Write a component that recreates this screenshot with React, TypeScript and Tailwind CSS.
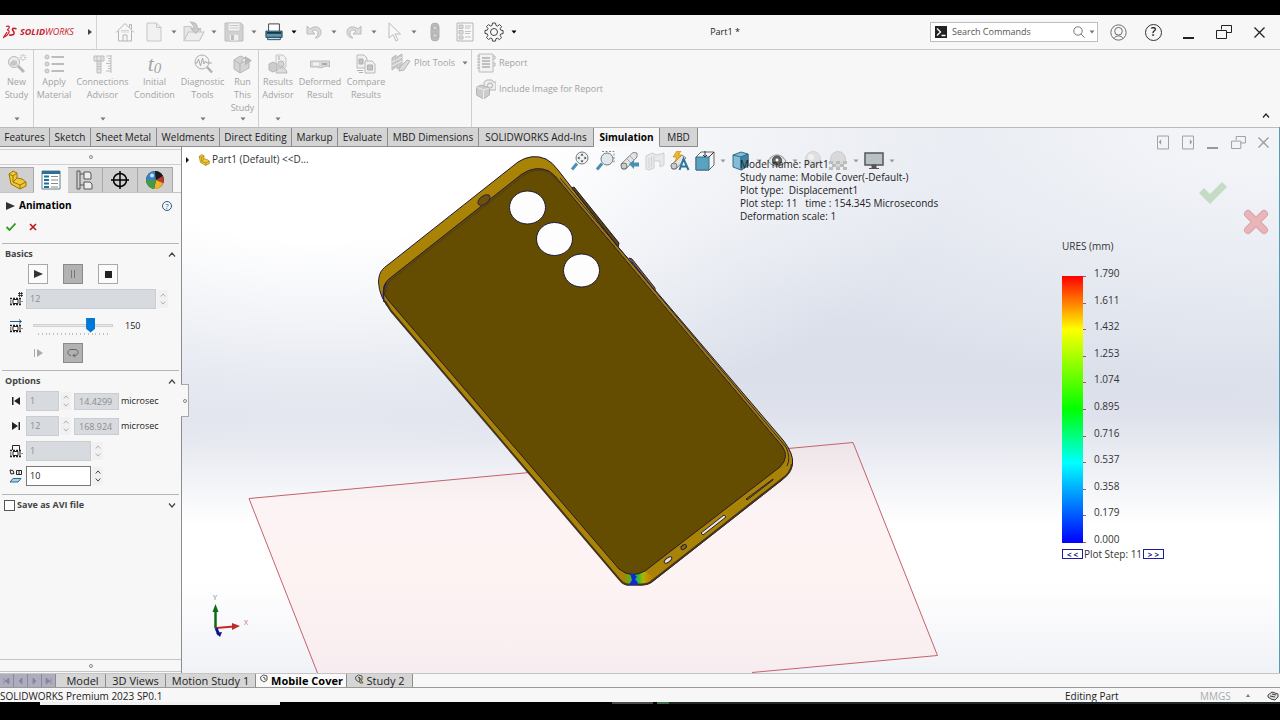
import { ReactNode } from "react";

function Icon({ children, size = 20, className = "" }: { children: ReactNode; size?: number; className?: string }) {
  return (
    <svg viewBox="0 0 20 20" width={size} height={size} className={`shrink-0 ${className}`} fill="none" stroke="currentColor" strokeWidth="1" aria-hidden="true">
      {children}
    </svg>
  );
}

function Caret({ className = "text-[#777]" }: { className?: string }) {
  return (
    <svg viewBox="0 0 6 4" width="6" height="4" className={`shrink-0 ${className}`} aria-hidden="true">
      <path d="M0.5 0.5h5L3 3.5z" fill="currentColor" />
    </svg>
  );
}

const icons = {
  home: (
    <Icon>
      <path d="M1 10.5 10 1.5l9 9M3.5 9v10h13V9M8 19v-6h4v6M14.5 5V2.500h2V7" stroke="#b5b5b5" />
      <path d="M6 10h8M6 8.500h8" stroke="#d5d5d5" />
    </Icon>
  ),
  doc: (
    <Icon>
      <path d="M3 1h9.500L17 5.500V19H3z" fill="#f1f1f1" stroke="#c6c6c6" />
      <path d="M12.500 1v4.500H17" stroke="#c6c6c6" />
    </Icon>
  ),
  open: (
    <Icon size={22}>
      <path d="M1 18V5h6l2 2h7v3" fill="#e6e6e6" stroke="#c6c6c6" />
      <path d="M1 18l4-8h14l-4 8z" fill="#eeeeee" stroke="#c6c6c6" />
      <path d="M7 1c4 0 6 2 6 6h2.500L11.500 11 7.500 7H10c0-2-1-4-3-6z" fill="#cccccc" stroke="#bdbdbd" />
    </Icon>
  ),
  save: (
    <Icon>
      <path d="M1 1h16l2 2v16H1z" fill="#d2d2d2" stroke="#bdbdbd" />
      <path d="M4 1h12v8H4z" fill="#f4f4f4" stroke="#c6c6c6" />
      <path d="M5.500 3.500h9M5.500 6h9" stroke="#c6c6c6" />
      <path d="M5 12h10v7H5z" fill="#efefef" stroke="#c6c6c6" />
      <path d="M7 13h3v5H7z" fill="#bdbdbd" stroke="none" />
    </Icon>
  ),
  print: (
    <Icon size={18}>
      <path d="M4 9V1h12v8" fill="#fff" stroke="#333" />
      <path d="M1 9h18v7H1z" fill="#5e93ad" stroke="#1d3f50" />
      <path d="M2 10h16v2H2z" fill="#16384a" stroke="none" />
      <path d="M3 16h14v2.500H3z" fill="#bfe0ee" stroke="#1d3f50" />
    </Icon>
  ),
  undo: (
    <Icon>
      <path d="M3 4v8h8L8 9c3-2 6-1 6 2 0 2-1 4-3 5 4 0 6-3 6-6 0-5-6-7-11-3z" fill="#dcdcdc" stroke="#bcbcbc" />
    </Icon>
  ),
  redo: (
    <Icon>
      <path d="M17 4v8H9l3-3c-3-2-6-1-6 2 0 2 1 4 3 5-4 0-6-3-6-6 0-5 6-7 11-3z" fill="#dcdcdc" stroke="#bcbcbc" />
    </Icon>
  ),
  cursor: (
    <Icon>
      <path d="M5 1v15l4-3.500L12 19l2-1-3-6h5.500z" fill="#f8f8f8" stroke="#bcbcbc" />
    </Icon>
  ),
  light: (
    <Icon>
      <rect x="6" y="1" width="8" height="18" rx="4" fill="#bdbdbd" stroke="#b0b0b0" />
      <circle cx="10" cy="6" r="2.500" fill="#cdcdcd" stroke="#a9a9a9" />
      <circle cx="10" cy="13.500" r="2.500" fill="#cdcdcd" stroke="#a9a9a9" />
    </Icon>
  ),
  list: (
    <Icon>
      <path d="M2 1h16v18H2z" stroke="#b5b5b5" />
      <path d="M4 3h4v3.500H4zM4 8.500h4V12H4zM4 14h4v3H4z" fill="#dcdcdc" stroke="#bcbcbc" />
      <path d="M10 4h6M10 6h5M10 9.500h6M10 11.500h5M10 15h6" stroke="#c2c2c2" />
    </Icon>
  ),
  gear: (
    <Icon>
      <path
        d="M8.500 1h3l.5 2.500 1.500.6L15.600 2.600l2 2-1.400 2.100.6 1.500 2.300.4v3l-2.400.4-.6 1.500 1.400 2.100-2 2-2.100-1.400-1.500.6-.4 2.300h-3l-.4-2.400-1.500-.6-2.100 1.400-2-2 1.400-2.100-.6-1.500L1 11.500v-3l2.400-.4.600-1.500L2.500 4.600l2-2L6.600 4l1.500-.6z"
        stroke="#444"
      />
      <circle cx="10" cy="10" r="3.500" stroke="#444" />
    </Icon>
  ),
  newStudy: (
    <Icon>
      <circle cx="7" cy="8" r="5.500" fill="#ececec" stroke="#b8b8b8" />
      <path d="M3 9l3-3 4 1v4l-4 1-3-1z" fill="#c7c7c7" stroke="none" />
      <path d="M11 12l6 6" stroke="#b8b8b8" strokeWidth="3" />
      <path d="M16 0v7M12.500 3.500h7M13.500 1l5 5M18.500 1l-5 5" stroke="#bdbdbd" />
      <circle cx="16" cy="3.500" r="1.500" fill="#f7f7f7" stroke="none" />
    </Icon>
  ),
  material: (
    <Icon>
      <circle cx="3" cy="3" r="2" fill="#d9d9d9" stroke="#bbb" />
      <circle cx="3" cy="10" r="2" fill="#d9d9d9" stroke="#bbb" />
      <circle cx="3" cy="17" r="2" fill="#d9d9d9" stroke="#bbb" />
      <path d="M7.500 3H20M7.500 10H20M7.500 17H20" stroke="#bdbdbd" strokeWidth="2" />
    </Icon>
  ),
  bolt: (
    <Icon>
      <path d="M1 2h10v5H1zM4 7h4v12H4z" fill="#e4e4e4" stroke="#bdbdbd" />
      <path d="M4 10h4M4 12.500h4M4 15h4M4 2v5M8 2v5" stroke="#bdbdbd" />
      <path d="M13 2h5M15 4.500h3M15 7h3M13 9.500h5M15 12h3M15 14.500h3M13 17h5M18 1v18" stroke="#bdbdbd" />
    </Icon>
  ),
  diagnostic: (
    <Icon>
      <circle cx="9" cy="8" r="7" fill="#f4f4f4" stroke="#b0b0b0" />
      <path d="M2 9h2l1.500-4 2 7 2-8 1.500 6 1.500-3 1.500 2h5" stroke="#a9a9a9" />
      <path d="M14 13l5 5.500" stroke="#b0b0b0" strokeWidth="2.500" />
    </Icon>
  ),
  run: (
    <Icon>
      <path d="M1 6l6-4 5 2-4 3 2 1 6-3v9l-9 5-6-4z" fill="#d4d4d4" stroke="#b8b8b8" />
      <path d="M7 10v9M1 6l6 4 3-2" stroke="#b5b5b5" />
      <path d="M12 2l7 4.500-7 5z" fill="#b9b9b9" stroke="none" />
    </Icon>
  ),
  results: (
    <Icon>
      <path d="M8 1h7l3 3v9H8z" fill="#f0f0f0" stroke="#c6c6c6" />
      <circle cx="13" cy="10" r="3" fill="#d6d6d6" stroke="#b8b8b8" />
      <path d="M8 19c0-7 11-7 11 0z" fill="#dcdcdc" stroke="#b8b8b8" />
      <path d="M1 10l4-2 4 2v6l-4 2-4-2z" fill="#cccccc" stroke="#b5b5b5" />
      <path d="M10 3h2M10 5h2" stroke="#aaa" />
    </Icon>
  ),
  deformed: (
    <Icon>
      <path d="M0.500 7h19v6c-4-3-8 3-12 0h-7z" fill="#d8d8d8" stroke="#bdbdbd" />
      <path d="M3 8.500h6v3H3z" fill="#f3f3f3" stroke="none" />
      <path d="M12 10h5" stroke="#aaa" strokeWidth="2" />
    </Icon>
  ),
  compare: (
    <Icon>
      <path d="M1 1h7l3 3v10H1z" fill="#f0f0f0" stroke="#bababa" />
      <path d="M9 7h7l3 3v9H9z" fill="#f0f0f0" stroke="#bababa" />
      <path d="M3 5h4v5H3zM11.500 11h5v5h-5z" fill="#c3c3c3" stroke="#b0b0b0" />
      <path d="M1 16.500h6M3 18.500h4" stroke="#b0b0b0" />
    </Icon>
  ),
  plot: (
    <Icon>
      <path d="M1 5l4-3v12l-4 3zM6 4l5-3v12l-5 3z" fill="#cacaca" stroke="#bababa" />
      <path d="M1 9l10-5M1 13l10-5" stroke="#eee" />
      <path d="M9 14l7-7 3 1-6 9-5 1z" fill="#dadada" stroke="#b5b5b5" />
    </Icon>
  ),
  report: (
    <Icon>
      <path d="M3 1h14v18H3z" fill="#f2f2f2" stroke="#bcbcbc" />
      <path d="M6 5h8M6 8h8M6 11h8M6 14h8" stroke="#b0b0b0" strokeWidth="1.500" />
      <path d="M1 3h3M1 6h3M1 9h3M1 12h3M1 15h3M17 3h2v3h-2M17 10h2v3h-2" stroke="#b5b5b5" />
    </Icon>
  ),
  image: (
    <Icon>
      <path d="M9 2l2-1h5l1 2h3v8H8V4z" fill="#ededed" stroke="#b5b5b5" />
      <circle cx="14" cy="6.500" r="2.500" stroke="#b0b0b0" />
      <path d="M0.500 8l5-2 8 3v7l-6 4-7-4z" fill="#cccccc" stroke="#b3b3b3" />
      <path d="M.5 8l7 3 6-2M7.500 11v9" stroke="#ededed" />
    </Icon>
  ),
};

const quickTools: { label: string; icon: ReactNode; wide?: boolean; caret?: string }[] = [
  { label: "Home", icon: icons.home, wide: true },
  { label: "New", icon: icons.doc, caret: "text-[#777]" },
  { label: "Open", icon: icons.open, caret: "text-[#777]" },
  { label: "Save", icon: icons.save, caret: "text-[#777]" },
  { label: "Print", icon: icons.print, caret: "text-black" },
  { label: "Undo", icon: icons.undo, caret: "text-[#777]" },
  { label: "Redo", icon: icons.redo, caret: "text-[#777]" },
  { label: "Select", icon: icons.cursor, caret: "text-[#777]" },
  { label: "Rebuild", icon: icons.light, wide: true },
  { label: "File Properties", icon: icons.list, wide: true },
  { label: "Settings", icon: icons.gear, caret: "text-black" },
];

function RestoreIcon({ size = 16 }: { size?: number }) {
  return (
    <svg viewBox="0 0 16 14" width={size} height={size - 2} fill="none" stroke="currentColor" aria-hidden="true">
      <path d="M5.500 4.500v-4h10v7h-5M0.500 5.500h10v8H.5z" />
    </svg>
  );
}

function CloseIcon({ size = 11 }: { size?: number }) {
  return (
    <svg viewBox="0 0 11 11" width={size} height={size} stroke="currentColor" strokeWidth="1.300" aria-hidden="true">
      <path d="M.5.5l10 10M10.500.5l-10 10" />
    </svg>
  );
}

function TitleBar() {
  return (
    <header className="flex h-[35px] items-center border-b border-[#c9c9c9] bg-[#f7f7f7]">
      <div className="flex h-full w-[97px] shrink-0 items-center border-r border-[#d4d4d4] pl-[3px]">
        <svg viewBox="0 0 15 14" width="15" height="14" fill="none" stroke="#c8202b" strokeWidth="1.200" aria-hidden="true">
          <path d="M3 1.500c4-1 4.500 1 1 3.500M4 5c4 0 2 5-3.500 7.500L4 7" />
          <path d="M13.500 4c-3-1.500-5-.5-3.500 1.500 2 2.500 2 5-4 4.500" strokeWidth="1.700" />
        </svg>
        <span className="ml-[2px] text-[9px] italic text-[#c8202b]">
          <b>SOLID</b>WORKS
        </span>
        <button aria-label="Menu" className="ml-auto mr-[4px]">
          <svg viewBox="0 0 4 6" width="4" height="6" aria-hidden="true">
            <path d="M0 0l4 3-4 3z" fill="#444" />
          </svg>
        </button>
      </div>
      <div className="flex h-full items-center pl-[13px]">
        {quickTools.map((t) => (
          <div key={t.label} className="flex items-center">
            <button aria-label={t.label} className={`flex items-center justify-center ${t.wide ? "w-[30px]" : "w-[28px]"}`}>
              {t.icon}
            </button>
            {t.caret && (
              <button aria-label={`${t.label} options`} className="flex w-[12px] justify-center">
                <Caret className={t.caret} />
              </button>
            )}
          </div>
        ))}
      </div>
      <h1 className="flex-1 text-center text-[9px] text-[#222]">Part1 *</h1>
      <label className="flex h-[20px] w-[168px] items-center border border-[#bdbdbd] bg-white px-[4px]">
        <svg viewBox="0 0 12 12" width="12" height="12" className="shrink-0" aria-hidden="true">
          <path d="M0 0h12v12H0z" fill="#222" />
          <path d="M2 2.500L5.500 6 2 9.500M6.500 9.500h4" stroke="#fff" fill="none" strokeWidth="1.300" />
        </svg>
        <input aria-label="Search Commands" placeholder="Search Commands" className="ml-[5px] min-w-0 flex-1 bg-transparent text-[9px] outline-none placeholder:text-[#555]" />
        <svg viewBox="0 0 12 12" width="12" height="12" fill="none" stroke="#777" aria-hidden="true">
          <circle cx="5" cy="5" r="4.200" />
          <path d="M8 8l3.500 3.500" />
        </svg>
        <span className="ml-[4px] -mr-[2px]">
          <Caret />
        </span>
      </label>
      <div className="ml-[3px] mr-[3px] flex items-center text-[#222]">
        <button aria-label="Account" className="flex w-[35px] justify-center">
          <Icon size={17} className="text-[#555]">
            <circle cx="10" cy="10" r="9" />
            <circle cx="10" cy="8.500" r="4.500" />
            <path d="M5 17c1-4 9-4 10 0" />
          </Icon>
        </button>
        <button aria-label="Help" className="flex w-[35px] justify-center">
          <span className="flex size-[17px] items-center justify-center rounded-full border border-[#333] text-[12px] font-semibold">?</span>
        </button>
        <button aria-label="Minimize" className="flex w-[35px] justify-center">
          <span className="mt-[11px] h-[2px] w-[11px] bg-[#222]" />
        </button>
        <button aria-label="Restore" className="flex w-[35px] justify-center">
          <RestoreIcon />
        </button>
        <button aria-label="Close" className="flex w-[36px] justify-center">
          <CloseIcon />
        </button>
      </div>
    </header>
  );
}

function RibbonButton({ icon, lines, width, caret }: { icon: ReactNode; lines: string[]; width: string; caret?: boolean }) {
  return (
    <button className={`flex h-full shrink-0 flex-col items-center pt-[4px] ${width}`}>
      {icon}
      <span className="mt-px flex flex-col leading-[13px]">
        {lines.map((l) => (
          <span key={l} className="whitespace-nowrap">
            {l}
          </span>
        ))}
      </span>
      {caret && (
        <span className="mt-auto mb-[6px]">
          <Caret />
        </span>
      )}
    </button>
  );
}

function Ribbon() {
  return (
    <div className="flex h-[77px] bg-[#f7f7f7] text-[9px] text-[#a3a3a3]">
      <div className="flex border-r border-[#d0d0d0]">
        <RibbonButton icon={icons.newStudy} lines={["New", "Study"]} width="w-[33px]" caret />
      </div>
      <div className="flex border-r border-[#d0d0d0]">
        <RibbonButton icon={icons.material} lines={["Apply", "Material"]} width="w-[40px]" />
        <RibbonButton icon={icons.bolt} lines={["Connections", "Advisor"]} width="w-[57px]" caret />
        <RibbonButton
          icon={<span className="flex h-[20px] items-center font-['Liberation_Serif',serif] text-[22px] italic leading-none text-[#a5a5a5]">t<sub className="text-[15px]">0</sub></span>}
          lines={["Initial", "Condition"]}
          width="w-[47px]"
        />
        <RibbonButton icon={icons.diagnostic} lines={["Diagnostic", "Tools"]} width="w-[49px]" caret />
        <RibbonButton icon={icons.run} lines={["Run", "This", "Study"]} width="w-[31px]" caret />
      </div>
      <div className="flex border-r border-[#d0d0d0]">
        <RibbonButton icon={icons.results} lines={["Results", "Advisor"]} width="w-[38px]" caret />
        <RibbonButton icon={icons.deformed} lines={["Deformed", "Result"]} width="w-[46px]" />
        <RibbonButton icon={icons.compare} lines={["Compare", "Results"]} width="w-[46px]" />
        <button className="flex h-[26px] w-[82px] items-center pl-[2px]">
          {icons.plot}
          <span className="ml-[3px] whitespace-nowrap">Plot Tools</span>
          <span className="ml-auto mr-[3px]">
            <Caret />
          </span>
        </button>
      </div>
      <div className="flex flex-col pl-[4px]">
        <button className="flex h-[26px] items-center gap-[3px]">
          {icons.report}
          Report
        </button>
        <button className="flex h-[25px] items-center gap-[3px]">
          {icons.image}
          Include Image for Report
        </button>
      </div>
      <button aria-label="Collapse ribbon" className="mb-[9px] ml-auto mr-[10px] self-end text-[#222]">
        <Chevron up />
      </button>
    </div>
  );
}

function Chevron({ up, small }: { up?: boolean; small?: boolean }) {
  return (
    <svg viewBox="0 0 8 5" width={small ? 6 : 8} height={small ? 4 : 5} fill="none" stroke="currentColor" strokeWidth="1.200" aria-hidden="true">
      <path d={up ? "M1 4.500l3-3.500 3 3.500" : "M1 .5L4 4 7 .5"} />
    </svg>
  );
}

const commandTabs = [
  ["Features", "w-[50px]"],
  ["Sketch", "w-[41px]"],
  ["Sheet Metal", "w-[66px]"],
  ["Weldments", "w-[63px]"],
  ["Direct Editing", "w-[72px]"],
  ["Markup", "w-[46px]"],
  ["Evaluate", "w-[50px]"],
  ["MBD Dimensions", "w-[91px]"],
  ["SOLIDWORKS Add-Ins", "w-[115px]"],
  ["Simulation", "w-[66px]"],
  ["MBD", "w-[38px]"],
];

function CommandTabs() {
  return (
    <nav className="flex h-[20px] border-t border-[#b9bbbd] text-[10px] text-[#222]">
      {commandTabs.map(([name, width]) => (
        <button
          key={name}
          className={`h-full shrink-0 whitespace-nowrap border-r border-b border-[#8d8d8d] leading-none ${width} ${
            name === "Simulation" ? "border-b-[#f7f7f7] bg-[#f7f7f7] font-bold text-black" : "bg-[#d4d4d4]"
          }`}
        >
          {name}
        </button>
      ))}
    </nav>
  );
}

function PartIcon({ size = 20 }: { size?: number }) {
  return (
    <Icon size={size}>
      <path d="M2 4l4-3 4 2v5l5 1 4 3v4l-6 3-9-5z" fill="#f0c93a" stroke="#9b7400" />
      <path d="M2 4l4 2 4-3M6 6v6l7 3 6-3M13 15v4M6 12l4-4" stroke="#9b7400" />
    </Icon>
  );
}

const panelTabs: { label: string; icon: ReactNode }[] = [
  { label: "Feature Tree", icon: <PartIcon /> },
  {
    label: "Property Manager",
    icon: (
      <Icon>
        <path d="M1 1h18v18H1z" fill="#fff" stroke="#5d7f90" />
        <path d="M1 1h18v3H1z" fill="#2c6e95" stroke="none" />
        <path d="M3 6.500h5M3 10h5M3 13.500h5M3 17h5" stroke="#1f6d99" strokeWidth="2" />
        <path d="M10 6.500h7M10 10h7M10 13.500h7M10 17h7" stroke="#888" />
      </Icon>
    ),
  },
  {
    label: "Configuration Manager",
    icon: (
      <Icon>
        <path d="M2 1h3v18H2zM5 4h4M5 15h4" stroke="#555" />
        <path d="M9 2h6l1 2v5H9zM9 12h6l2 2v5H9z" fill="#eee" stroke="#555" />
      </Icon>
    ),
  },
  {
    label: "Dimensions",
    icon: (
      <Icon className="text-black">
        <circle cx="10" cy="10" r="6.500" strokeWidth="1.500" />
        <path d="M10 1v18M1 10h18" strokeWidth="1.500" />
      </Icon>
    ),
  },
  {
    label: "Display Manager",
    icon: (
      <Icon>
        <circle cx="10" cy="10" r="9" fill="#1e2a36" stroke="none" />
        <path d="M11 10H1a9 9 0 0 1 9-9z" fill="#3d7fc4" stroke="none" />
        <path d="M11 10L10 1a9 9 0 0 1 8 5z" fill="#1b1b1b" stroke="none" />
        <path d="M11 10l7-4a9 9 0 0 1 0 7z" fill="#c0392b" stroke="none" />
        <path d="M11 10l7 3a9 9 0 0 1-9 6z" fill="#f0b429" stroke="none" />
        <path d="M11 10l-2 9a9 9 0 0 1-8-9z" fill="#3f9b46" stroke="none" />
        <circle cx="7" cy="5.500" r="2" fill="#bfe0ff" stroke="none" />
      </Icon>
    ),
  },
];

function Spinner({ label, value, width, disabled }: { label: string; value: string; width: string; disabled?: boolean }) {
  return (
    <div className="flex h-[20px] items-center">
      <input
        aria-label={label}
        defaultValue={value}
        disabled={disabled}
        className={`h-[20px] border px-[3px] pb-[2px] text-[9px] ${width} ${disabled ? "border-[#c9cdd1] bg-[#d7dade] text-[#8d8d8d]" : "border-[#777] bg-white text-[#222]"}`}
      />
      <div className={`ml-px flex h-[18px] w-[11px] flex-col items-center justify-between bg-[#f1f1f1] py-[3px] ${disabled ? "text-[#aaa]" : "text-[#333]"}`}>
        <button aria-label={`Increase ${label}`} disabled={disabled}>
          <Chevron up small />
        </button>
        <button aria-label={`Decrease ${label}`} disabled={disabled}>
          <Chevron small />
        </button>
      </div>
    </div>
  );
}

function FilmIcon({ kind }: { kind: "count" | "speed" | "frame" | "step" }) {
  return (
    <svg viewBox="0 0 14 14" width="14" height="14" className="shrink-0" fill="none" stroke="#222" aria-hidden="true">
      {kind !== "step" && (
        <>
          <path d="M1 6h12v7H1z" fill="#fff" stroke="none" />
          <path d="M1 6.500h12M1 12.500h12" strokeDasharray="2 1" strokeWidth="1.500" />
          <path d="M1 9h1.500M1 11h1.500M4 7.500v4M4 7.500h5v4H4M11 7v5M12.500 9.500h1" />
        </>
      )}
      {kind === "count" && <path d="M9 1.500h5M9 3.500h5M10.500 0v5M12.500 0v5" strokeWidth=".8" />}
      {kind === "speed" && <path d="M1 2.500h11M10 .5l2.500 2-2.500 2" stroke="#20617f" />}
      {kind === "frame" && <path d="M3.500 6V1.500h7V6" />}
      {kind === "step" && (
        <>
          <path d="M1 1l3 .5 1 3-3 .5zM7.500 1.500h5v4h-5zM10 1.500v4" />
          <path d="M4 9.500h8l-3 3.500H1z" fill="#a8d3ea" stroke="#2b6a8b" />
        </>
      )}
    </svg>
  );
}

function Dot() {
  return <span className="size-[4px] rounded-full border border-[#888]" />;
}

const square = "flex size-[20px] items-center justify-center border";

function PropertyPanel() {
  return (
    <aside className="relative flex w-[182px] shrink-0 flex-col border-r border-[#8c8c8c] bg-[#f7f7f7] text-[#222]">
      <div className="mt-[2px] flex h-[16px] items-center justify-center border-y border-[#cfcfcf]">
        <Dot />
      </div>
      <div className="flex h-[28px] items-stretch border-b border-[#c4c4c4] pt-[2px]">
        {panelTabs.map((t, i) => (
          <button
            key={t.label}
            aria-label={t.label}
            className={`flex items-center justify-center ${i < 2 ? "w-[34px]" : "w-[35px]"} ${i === 1 ? "-mb-px bg-[#f7f7f7]" : "border border-b-0 border-l-0 border-[#a8a8a8] bg-[#d0d0d0]"}`}
          >
            {t.icon}
          </button>
        ))}
      </div>
      <div className="flex h-[25px] items-center pr-[9px] pl-[6px]">
        <svg viewBox="0 0 9 8" width="9" height="8" aria-hidden="true">
          <path d="M0 0l9 4-9 4z" fill="#333" />
        </svg>
        <h2 className="ml-[4px] text-[10px] font-bold text-black">Animation</h2>
        <button aria-label="Help" className="ml-auto flex size-[10px] items-center justify-center rounded-full border border-[#2b5d7a] text-[8px] leading-none text-[#2b5d7a]">
          ?
        </button>
      </div>
      <div className="flex h-[18px] items-center gap-[13px] pl-[6px]">
        <button aria-label="OK">
          <svg viewBox="0 0 10 8" width="10" height="8" fill="none" stroke="#2f9a1f" strokeWidth="1.800" aria-hidden="true">
            <path d="M.5 4L3.500 7 9.500.5" />
          </svg>
        </button>
        <button aria-label="Cancel">
          <svg viewBox="0 0 8 8" width="8" height="8" stroke="#c4161c" strokeWidth="1.600" aria-hidden="true">
            <path d="M1 1l6 6M7 1L1 7" />
          </svg>
        </button>
      </div>
      <section className="mx-[2px] mt-[7px] h-[127px] border-t border-[#b5b5b5]">
        <div className="flex h-[20px] items-center justify-between pr-[3px] pl-[3px] text-[#444]">
          <h3 className="text-[9px] font-bold">Basics</h3>
          <button aria-label="Collapse Basics">
            <Chevron up />
          </button>
        </div>
        <div className="flex gap-[15px] pl-[26px]">
          <button aria-label="Play" className={`${square} border-[#a8a8a8] bg-[#fbfbfb]`}>
            <svg viewBox="0 0 9 8" width="9" height="8" aria-hidden="true">
              <path d="M0 0l9 4-9 4z" fill="#333" />
            </svg>
          </button>
          <button aria-label="Pause" className={`${square} gap-[2px] border-[#8a8a8a] bg-[#b2b2b2]`}>
            <span className="h-[8px] w-px bg-[#777]" />
            <span className="h-[8px] w-px bg-[#777]" />
          </button>
          <button aria-label="Stop" className={`${square} border-[#a8a8a8] bg-[#fbfbfb]`}>
            <span className="size-[7px] bg-[#222]" />
          </button>
        </div>
        <div className="mt-[5px] flex items-center gap-[3px] pl-[7px]">
          <FilmIcon kind="count" />
          <Spinner label="Number of frames" value="12" width="w-[130px]" disabled />
        </div>
        <div className="mt-[4px] flex h-[26px] items-center pl-[7px]">
          <FilmIcon kind="speed" />
          <div className="ml-[10px] flex w-[80px] flex-col">
            <input
              type="range"
              aria-label="Speed"
              min={0}
              max={200}
              defaultValue={151}
              className="h-[15px] w-full appearance-none bg-transparent [&::-webkit-slider-runnable-track]:h-[3px] [&::-webkit-slider-runnable-track]:border [&::-webkit-slider-runnable-track]:border-[#d0d0d0] [&::-webkit-slider-runnable-track]:bg-[#e8e8e8] [&::-webkit-slider-thumb]:-mt-[7px] [&::-webkit-slider-thumb]:h-[15px] [&::-webkit-slider-thumb]:w-[9px] [&::-webkit-slider-thumb]:appearance-none [&::-webkit-slider-thumb]:bg-[#0078d7] [&::-webkit-slider-thumb]:[clip-path:polygon(0_0,100%_0,100%_75%,50%_100%,0_75%)]"
            />
            <div className="mx-[5px] flex h-[2px] justify-between">
              {Array.from({ length: 19 }, (_, i) => (
                <span key={i} className="w-px bg-[#c0c0c0]" />
              ))}
            </div>
          </div>
          <output className="ml-[12px] text-[9px]">150</output>
        </div>
        <div className="mt-[4px] flex gap-[15px] pl-[26px]">
          <button aria-label="Play once" className="flex size-[20px] items-center justify-center">
            <svg viewBox="0 0 9 8" width="9" height="8" aria-hidden="true">
              <path d="M0 0h1v8H0zM3 0l6 4-6 4z" fill="#aaa" />
            </svg>
          </button>
          <button aria-label="Loop" className={`${square} border-[#8a8a8a] bg-[#b2b2b2]`}>
            <svg viewBox="0 0 12 10" width="12" height="10" fill="none" stroke="#666" aria-hidden="true">
              <path d="M4 7.500C0 7.500 0 1.500 4 1.500h4c4 0 4 6 0 6H6M8 5.500l-2 2 2 2" />
            </svg>
          </button>
        </div>
      </section>
      <section className="mx-[2px] h-[124px] border-t border-[#b5b5b5] text-[9px]">
        <div className="flex h-[20px] items-center justify-between pr-[3px] pl-[3px] text-[#444]">
          <h3 className="font-bold">Options</h3>
          <button aria-label="Collapse Options">
            <Chevron up />
          </button>
        </div>
        <div className="flex flex-col gap-[5px]">
          {[
            ["Start frame", "1", "14.4299", "M0 0h1.500v8H0zM8 0v8L2 4z"],
            ["End frame", "12", "168.924", "M0 0v8l6-4zM6.500 0H8v8H6.500z"],
          ].map(([label, frame, time, path]) => (
            <div key={label} className="flex items-center pl-[10px]">
              <svg viewBox="0 0 8 8" width="8" height="8" className="mr-[6px]" aria-hidden="true">
                <path d={path} fill="#222" />
              </svg>
              <Spinner label={label} value={frame} width="w-[33px]" disabled />
              <input aria-label={`${label} time`} defaultValue={time} disabled className="ml-[3px] h-[17px] w-[45px] border border-[#c9cdd1] bg-[#d7dade] px-[4px] text-[#8d8d8d]" />
              <span className="ml-[2px]">microsec</span>
            </div>
          ))}
          <div className="flex items-center gap-[3px] pl-[7px]">
            <FilmIcon kind="frame" />
            <Spinner label="Frame step" value="1" width="w-[65px]" disabled />
          </div>
          <div className="flex items-center gap-[3px] pl-[7px]">
            <FilmIcon kind="step" />
            <Spinner label="Increment" value="10" width="w-[65px]" />
          </div>
        </div>
      </section>
      <section className="mx-[2px] flex h-[21px] items-center justify-between border-t border-[#b5b5b5] pr-[3px] pl-[2px] text-[#444]">
        <label className="flex items-center gap-[2px] text-[9px] font-bold">
          <input type="checkbox" className="size-[11px] appearance-none border border-[#555] bg-white" />
          Save as AVI file
        </label>
        <button aria-label="Expand Save as AVI file">
          <Chevron />
        </button>
      </section>
      <div className="mt-auto mb-[1px] flex h-[13px] items-center justify-center border-y border-[#c4c4c4]">
        <Dot />
      </div>
      <button aria-label="Hide panel" className="absolute top-[237px] left-full flex h-[33px] w-[8px] items-center justify-center border border-l-0 border-[#a8a8a8] bg-[#f7f7f7]">
        <Dot />
      </button>
    </aside>
  );
}

const glass = (
  <path d="M2 18.500l5-6" stroke="#4b90b0" strokeWidth="3" />
);

const viewTools: { label: string; icon: ReactNode; caret?: boolean }[] = [
  {
    label: "Zoom to Fit",
    icon: (
      <Icon>
        {glass}
        <circle cx="12" cy="7" r="6" fill="#eef1f3" stroke="#777" />
        <path d="M12 2.500l1.500 2h-3zM12 11.500l1.500-2h-3zM7.500 7l2-1.500v3zM16.500 7l-2-1.500v3z" fill="#333" stroke="none" />
      </Icon>
    ),
  },
  {
    label: "Zoom to Area",
    icon: (
      <Icon>
        <path d="M7 .5h12v12" stroke="#888" strokeDasharray="2 1.500" />
        {glass}
        <circle cx="12" cy="8" r="6" fill="#dfe8ed" stroke="#777" />
      </Icon>
    ),
  },
  {
    label: "Previous View",
    icon: (
      <Icon>
        <path d="M1 13L13 1.500l4 .5v4L6 18H2z" fill="#e4e4e4" stroke="#888" />
        <path d="M7 8l4 4M10 5l4 4" stroke="#aaa" />
        <circle cx="4" cy="15" r="3" fill="#ccc" stroke="#777" />
        <path d="M9 13l5-4v2.500h5v4h-5V18z" fill="#4b90b0" stroke="none" />
      </Icon>
    ),
  },
  {
    label: "Section View",
    icon: (
      <Icon>
        <path d="M1 5l6-3 5 2 7-2v12l-4 2v-6H9v7l-5 2-3-1z" fill="#e9e9e9" stroke="#cfcfcf" />
        <path d="M4 7v10M6.500 6v10M9 5v5" stroke="#d2d2d2" />
      </Icon>
    ),
  },
  {
    label: "Dynamic Annotation",
    icon: (
      <Icon>
        <path d="M1 14L12 4l4 3L6 18H2z" fill="#e4e4e4" stroke="#888" />
        <circle cx="4" cy="15" r="3" fill="#ccc" stroke="#777" />
        <path d="M7 0L3 6h3.500L5 11l7-7H8.500L11 0z" fill="#f4b629" stroke="#b98300" strokeWidth=".6" />
        <path d="M9.500 19L13.500 8l5 11M11 15.500h6" stroke="#2e7598" strokeWidth="2" />
      </Icon>
    ),
  },
  {
    label: "View Orientation",
    icon: (
      <Icon>
        <path d="M6 1h13v13l-5 5H1V6z" stroke="#666" fill="#f4f6f7" />
        <path d="M1 6h13v13H1z" fill="#5aa2c2" stroke="#356f8b" />
        <path d="M14 6l5-5M10 0v6M8 4l2 2 2-2" stroke="#333" />
      </Icon>
    ),
    caret: true,
  },
  {
    label: "Display Style",
    icon: (
      <Icon>
        <path d="M2 4l8-3 7 2v12l-7 4-8-3z" fill="#7fbdd8" stroke="#356f8b" />
        <path d="M2 4l8 2 7-3M10 6v13" stroke="#356f8b" />
        <path d="M10 6l7-3v12l-7 4z" fill="#4285a3" stroke="#356f8b" />
      </Icon>
    ),
    caret: true,
  },
  {
    label: "Hide/Show Items",
    icon: (
      <Icon>
        <path d="M1 10c5-8 13-8 18 0-5 7-13 7-18 0z" fill="#e6e6e6" stroke="#888" />
        <circle cx="10" cy="9.500" r="4.500" fill="#666" stroke="#444" />
        <circle cx="10" cy="9" r="1.500" fill="#fff" stroke="none" />
      </Icon>
    ),
    caret: true,
  },
  {
    label: "Edit Appearance",
    icon: (
      <Icon>
        <circle cx="10" cy="8" r="7.500" fill="#dfdfdf" stroke="#d2d2d2" />
        <circle cx="8" cy="6" r="3" fill="#f0f0f0" stroke="none" />
      </Icon>
    ),
  },
  {
    label: "Apply Scene",
    icon: (
      <Icon>
        <circle cx="10" cy="8" r="7.500" fill="#d9d9d9" stroke="#cbcbcb" />
        <path d="M1 10h4v3H1zM15 10h4v3h-4zM8 10h4v3H8zM4 13h4v3H4zM12 13h4v3h-4zM1 16h4v3H1zM8 16h4v3H8zM15 16h4v3h-4z" fill="#bcbcbc" stroke="none" />
      </Icon>
    ),
    caret: true,
  },
  {
    label: "View Settings",
    icon: (
      <Icon>
        <path d="M1 2h18v12H1z" fill="#b8c2c6" stroke="#555" strokeWidth="1.500" />
        <path d="M8 14h4v3H8zM5 17.500h10" fill="#555" stroke="#555" />
      </Icon>
    ),
    caret: true,
  },
];

function Scene() {
  return (
    <svg viewBox="182 147 1098 526" preserveAspectRatio="xMinYMin slice" className="absolute inset-0 size-full" role="img" aria-label="Deformed mobile cover">
      <defs>
        <linearGradient id="plane" x1="0" y1="0" x2="0" y2="1">
          <stop offset="0" stopColor="#ede4e9" />
          <stop offset=".25" stopColor="#fcf3f4" />
          <stop offset=".6" stopColor="#fef3f3" />
          <stop offset="1" stopColor="#f7ecef" />
        </linearGradient>
        <linearGradient id="spot" x1="616" y1="0" x2="656" y2="0" gradientUnits="userSpaceOnUse">
          <stop offset="0" stopColor="#a98306" />
          <stop offset=".2" stopColor="#a98306" />
          <stop offset=".35" stopColor="#5cb010" />
          <stop offset=".45" stopColor="#12a8a0" />
          <stop offset=".55" stopColor="#30b840" />
          <stop offset=".68" stopColor="#a8b800" />
          <stop offset=".8" stopColor="#c78a00" />
          <stop offset="1" stopColor="#a98306" />
        </linearGradient>
      </defs>
      <path d="M249 498.500L853 442.500 937.500 655.500 752 673H317.500z" fill="url(#plane)" />
      <path d="M317.500 673L249 498.500 853 442.500 937.500 655.500 752 672.500" fill="none" stroke="#c4626c" />

      <path
        d="M378.500 282C379 272 382 269 389 264L518 162Q532 153 546 159 552 162 558 170L572 188 619 248 655 290 783 440Q794 454 792.500 464 791 473 782 480L652 582Q648 585 642 585H627Q623 584 620 580L391 311Q379 297 378.500 282z"
        fill="#a98306"
        stroke="#1f1838"
      />
      <path d="M620 571L645 571 653 577 649 582Q646 584 642 584H627Q623 583 620 578z" fill="url(#spot)" />
      <path d="M385 301L391 311 620 580Q623 584 627 584.500H642Q648 584.500 652 581L782 479Q791 473 792 464" fill="none" stroke="#43341f" strokeWidth="2" />
      <path
        d="M384 294Q382 285 389 279L522 174Q536 165 549 171 555 175 560 182L782 446Q790 457 780 467L645 571Q631 579 619 569L389 301z"
        fill="#644d00"
        stroke="#2a1d2d"
      />
      <path d="M386 292Q385 286 391 280L523 176Q536 167 548 172 554 176 559 183" fill="none" stroke="#4e3928" />
      <path d="M384 302Q382 290 386 283" fill="none" stroke="#2a1f5c" strokeWidth="1.500" />
      <path d="M572 188l2-1 45 56-1 4z" fill="#5a4508" stroke="#1b1530" />
      <path d="M629 258l3 1 23 29v3z" fill="#7d6748" stroke="#2b2034" />
      <path d="M556 176L575 198 655 294 784 447" fill="none" stroke="#8b6d22" />
      <path d="M560 178L655 291 786 447" fill="none" stroke="#33243a" />
      <path d="M786 447Q791 458 787 466" fill="none" stroke="#33243a" />
      <path d="M630 573l4 1 3 3-2 2 3 4-2 2h-7l3-5z" fill="#1027d8" />
      <ellipse cx="484" cy="200" rx="7" ry="4" transform="rotate(-37 484 200)" fill="#6b5207" stroke="#33234a" />
      <g fill="#fdfdfe" stroke="#1e1838">
        <ellipse cx="527.500" cy="207.500" rx="18" ry="16.500" />
        <ellipse cx="554.500" cy="239" rx="18" ry="16.500" />
        <ellipse cx="581.500" cy="270.500" rx="18" ry="16.500" />
      </g>
      <g stroke="#2b2138" fill="#e9e5de">
        <ellipse cx="668" cy="560" rx="4.500" ry="2" transform="rotate(-38 668 560)" />
        <ellipse cx="683.500" cy="547.500" rx="3" ry="2" transform="rotate(-38 683 547)" fill="#8a6a10" />
        <path d="M701 533l23-18 2 2-23 18z" />
        <path d="M746 499l27-20v1l-26 20z" fill="#8a6a10" />
      </g>

      <g fill="none" strokeWidth="2">
        <path d="M215.500 628V610" stroke="#0d6b18" strokeWidth="2.500" />
        <path d="M212.500 612l3-8 3 8z" fill="#0d6b18" stroke="none" />
        <path d="M216 628l18-1.500" stroke="#c22929" />
        <path d="M232 623l8 3-8 4z" fill="#c22929" stroke="none" />
        <path d="M216 628l3 7" stroke="#14148f" strokeWidth="3" />
        <path d="M216 633l6-1-2 5z" fill="#14148f" stroke="none" />
      </g>
      <text x="213" y="600" fontSize="7" fill="#4a8a73">Y</text>
      <text x="244" y="625" fontSize="7" fill="#c86a7a">X</text>
    </svg>
  );
}

const legend = ["1.790", "1.611", "1.432", "1.253", "1.074", "0.895", "0.716", "0.537", "0.358", "0.179", "0.000"];

function Legend() {
  return (
    <div className="absolute top-[92px] right-[115px] w-[102px] text-[10px] leading-[14px] text-[#333]">
      <p>URES (mm)</p>
      <div className="mt-[13px] flex h-[280px]">
        <div className="mt-[10px] h-[267px] w-[21px] bg-[linear-gradient(to_bottom,#f00,#ff0_20%,#0f0_50%,#0ff_70%,#00f)]" />
        <div className="mt-[10px] flex h-[267px] w-[3px] flex-col justify-between">
          {legend.map((v) => (
            <span key={v} className="h-px bg-[#b0505a]" />
          ))}
        </div>
        <ol className="ml-[8px] flex flex-col justify-between">
          {legend.map((v) => (
            <li key={v}>{v}</li>
          ))}
        </ol>
      </div>
      <div className="mt-[1px] flex items-center justify-between whitespace-nowrap">
        <button aria-label="Previous plot step" className="h-[10px] w-[21px] border border-[#1c1c9c] text-[8px] leading-[7px] font-bold text-[#1c1c9c]">
          &lt; &lt;
        </button>
        <span>Plot Step: 11</span>
        <button aria-label="Next plot step" className="h-[10px] w-[21px] border border-[#1c1c9c] text-[8px] leading-[7px] font-bold text-[#1c1c9c]">
          &gt; &gt;
        </button>
      </div>
    </div>
  );
}

function Viewport() {
  return (
    <main className="relative min-w-0 flex-1 overflow-hidden">
      <Scene />
      <div className="absolute top-[5px] left-[4px] flex items-center text-[10px] text-[#333]">
        <svg viewBox="0 0 4 6" width="4" height="6" aria-hidden="true">
          <path d="M0 0l3 3-3 3z" fill="#111" />
        </svg>
        <span className="ml-[8px]">
          <PartIcon size={12} />
        </span>
        <span className="ml-[2px]">Part1 (Default) &lt;&lt;D...</span>
      </div>
      <div className="absolute top-[4px] left-[385px] flex items-center">
        {viewTools.map((t) => (
          <div key={t.label} className="flex items-center">
            <button aria-label={t.label} className="flex w-[25px] justify-center">
              {t.icon}
            </button>
            {t.caret && (
              <span className="flex w-[11px] justify-center">
                <Caret className="text-[#999]" />
              </span>
            )}
          </div>
        ))}
      </div>
      <div className="absolute top-[11px] left-[558px] text-[10px] leading-[13px] whitespace-pre text-[#222]">
        <p>Model name: Part1</p>
        <p>Study name: Mobile Cover(-Default-)</p>
        <p>{"Plot type:  Displacement1"}</p>
        <p>{"Plot step: 11   time : 154.345 Microseconds"}</p>
        <p>Deformation scale: 1</p>
      </div>
      <button aria-label="Accept" className="absolute top-[34px] right-[51px]">
        <svg viewBox="0 0 30 24" width="30" height="24" aria-hidden="true">
          <path d="M1 12l5-5 6 6L24 1l5 5-17 17z" fill="#c3dcc3" />
        </svg>
      </button>
      <button aria-label="Reject" className="absolute top-[62px] right-[10px]">
        <svg viewBox="0 0 26 26" width="26" height="26" fill="none" strokeLinecap="round" aria-hidden="true">
          <path d="M5 5l16 16M21 5L5 21" stroke="#d9a5ab" strokeWidth="8" />
          <path d="M5 5l16 16M21 5L5 21" stroke="#eab5b8" strokeWidth="6" />
        </svg>
      </button>
      <Legend />
    </main>
  );
}

function DocumentControls() {
  return (
    <div className="absolute top-[8px] right-[10px] flex items-center text-[#999]">
      {[
        ["Dock left", "M4.500 4v6L2 7z"],
        ["Dock right", "M8.500 4v6L11 7z"],
      ].map(([label, arrow]) => (
        <button key={label} aria-label={label} className="mr-[13px]">
          <svg viewBox="0 0 13 15" width="12" height="15" fill="none" stroke="currentColor" aria-hidden="true">
            <path d="M.5.5h12v14H.5z" />
            <path d={arrow} fill="currentColor" stroke="none" />
          </svg>
        </button>
      ))}
      <button aria-label="Minimize document" className="mt-[10px] mr-[13px] h-[2px] w-[11px] bg-[#999]" />
      <button aria-label="Restore document" className="mr-[12px]">
        <RestoreIcon size={15} />
      </button>
      <button aria-label="Close document">
        <CloseIcon />
      </button>
    </div>
  );
}

function StudyIcon({ warn }: { warn?: boolean }) {
  return (
    <svg viewBox="0 0 10 10" width="10" height="10" className="mb-[4px] shrink-0" fill="none" stroke="#555" aria-hidden="true">
      <path d="M1.500 3l3-2 3.500 1v4L5 8 2 6zM4 3l2 1v2" />
      {warn && <path d="M5 3l4 6H6z" fill="#e9c52c" stroke="#444" strokeWidth=".8" />}
    </svg>
  );
}

const studyTabs: { name: string; width: string; icon?: ReactNode; active?: boolean }[] = [
  { name: "Model", width: "w-[46px]" },
  { name: "3D Views", width: "w-[60px]" },
  { name: "Motion Study 1", width: "w-[90px]" },
  { name: "Mobile Cover", width: "w-[91px]", icon: <StudyIcon />, active: true },
  { name: "Study 2", width: "w-[66px]", icon: <StudyIcon warn /> },
];

function StudyTabs() {
  return (
    <nav className="flex h-[15px] border-y border-t-[#c4c4c4] border-b-[#999] bg-[#f7f7f7] text-[11px] leading-none text-[#222]">
      <div className="flex w-[60px] bg-[#d6d6d6]">
        {["M1 0v6M6 0v6L2 3z", "M5 0v6L2 3z", "M2 0v6l3-3z", "M6 0v6M1 0v6l4-3z"].map((d, i) => (
          <button key={d} aria-label={["First", "Previous", "Next", "Last"][i]} className="flex w-[14px] items-center justify-center border-r border-[#8a8a9c] bg-[#adadbd]">
            <svg viewBox="0 0 7 6" width="7" height="6" fill="#85859a" stroke="#85859a" strokeWidth=".8" aria-hidden="true">
              <path d={d} />
            </svg>
          </button>
        ))}
      </div>
      {studyTabs.map((t) => (
        <button
          key={t.name}
          className={`flex shrink-0 items-center justify-center gap-[2px] whitespace-nowrap border-r border-[#8d8d8d] ${t.width} ${t.active ? "bg-[#fafafa] font-bold text-black" : "bg-[#d6d6d6]"}`}
        >
          {t.icon}
          {t.name}
        </button>
      ))}
    </nav>
  );
}

function StatusBar() {
  return (
    <footer className="bg-black">
      <div className="flex h-[14px] items-center bg-[#f7f7f7] pt-px text-[10px] leading-none text-[#222]">
        <span className="flex-1">SOLIDWORKS Premium 2023 SP0.1</span>
        <span className="w-[135px]">Editing Part</span>
        <span className="w-[46px] text-[#aaa]">MMGS</span>
        <svg viewBox="0 0 4 3" width="4" height="3" aria-hidden="true">
          <path d="M0 3l2-3 2 3z" fill="#777" />
        </svg>
        <svg viewBox="0 0 12 10" width="12" height="10" className="ml-[17px] mr-px" fill="#ddd" stroke="#444" aria-hidden="true">
          <path d="M1 4l4-3 6 2v3L8 9 4 8 1 6zM3 5l5 1M5 3l4 1" />
        </svg>
      </div>
      <div className="flex h-[18px] items-start">
        <span className="ml-[40px] h-[3px] w-[240px] bg-[#f0f0f0]" />
        <span className="ml-[332px] h-[2px] w-[41px] bg-[#4a4a4a]" />
        <span className="ml-[4px] h-[2px] w-[12px] bg-[#3d6b45]" />
        <span className="h-[2px] flex-1 bg-[#22272a]" />
      </div>
    </footer>
  );
}

export default function App() {
  return (
    <div className="flex min-h-screen flex-col bg-black pt-[15px] font-['Open_Sans','Noto_Sans',sans-serif]">
      <TitleBar />
      <Ribbon />
      <div className="relative flex flex-1 flex-col border-r border-[#4fa0b5] bg-[radial-gradient(ellipse_60%_70%_at_25%_0%,#fff_30%,transparent_85%),radial-gradient(ellipse_at_100%_0%,#f2f4f8_5%,transparent_35%),linear-gradient(to_bottom,#e0e4ed_0%,#dadfea_45%,#dfe2ec_53%,#fff_73%,#fff_83%,#f1f2f7_100%)]">
        <CommandTabs />
        <div className="flex flex-1">
          <PropertyPanel />
          <Viewport />
        </div>
        <DocumentControls />
      </div>
      <StudyTabs />
      <StatusBar />
    </div>
  );
}
